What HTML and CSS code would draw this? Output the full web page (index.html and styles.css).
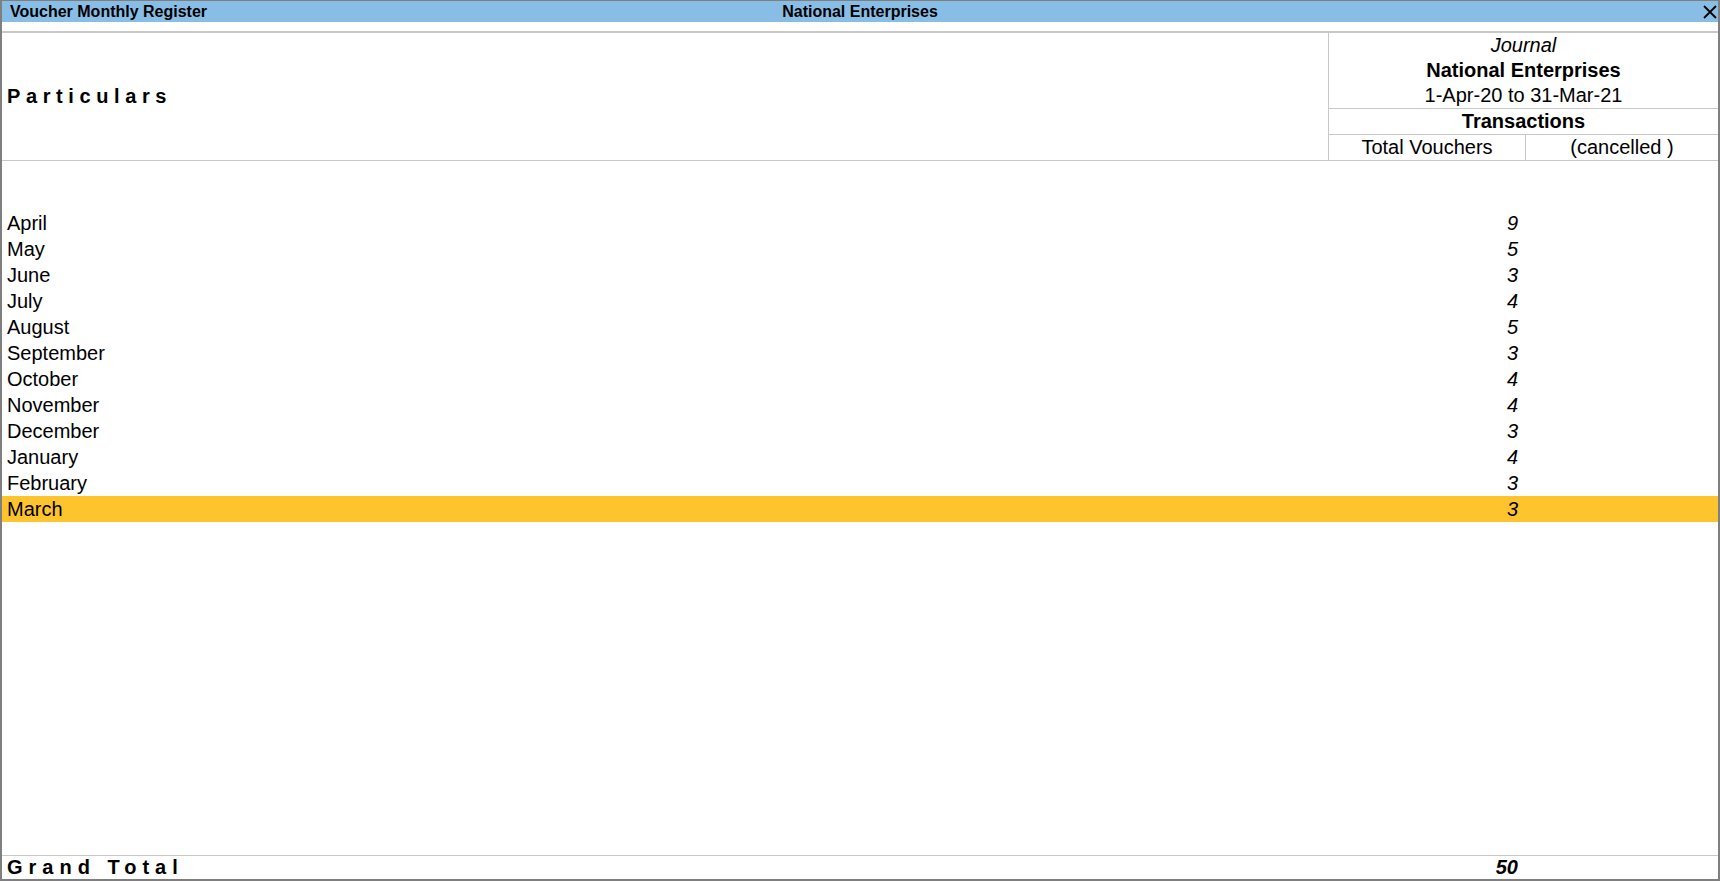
FILE: index.html
```html
<!DOCTYPE html>
<html>
<head>
    <meta charset="utf-8"/>
    <title>Voucher Monthly Register</title>
    <link rel="stylesheet" href="styles.css">
</head>
<body>

<div class="window">
    <div class="title-bar">
        <span class="title-left">Voucher Monthly Register</span>
        <span class="title-mid">National Enterprises</span>
        <span class="title-close">
            <svg width="14" height="14" viewBox="0 0 14 14"><path d="M1 1 L13 13 M13 1 L1 13" stroke="#000" stroke-width="1.8" fill="none"/></svg>
        </span>
    </div>
    <div class="title-gap"></div>

    <div class="report-head">
        <div class="head-particulars">Particulars</div>
        <div class="head-cols">
            <div class="head-info">
                <div class="i">Journal</div>
                <div class="b">National Enterprises</div>
                <div>1-Apr-20 to 31-Mar-21</div>
            </div>
            <div class="head-trans">Transactions</div>
            <div class="head-sub">
                <div>Total Vouchers</div>
                <div>(cancelled )</div>
            </div>
        </div>
    </div>

    <div class="report-body">
        <div class="row"><div class="name">April</div><div class="num">9</div><div></div></div>
        <div class="row"><div class="name">May</div><div class="num">5</div><div></div></div>
        <div class="row"><div class="name">June</div><div class="num">3</div><div></div></div>
        <div class="row"><div class="name">July</div><div class="num">4</div><div></div></div>
        <div class="row"><div class="name">August</div><div class="num">5</div><div></div></div>
        <div class="row"><div class="name">September</div><div class="num">3</div><div></div></div>
        <div class="row"><div class="name">October</div><div class="num">4</div><div></div></div>
        <div class="row"><div class="name">November</div><div class="num">4</div><div></div></div>
        <div class="row"><div class="name">December</div><div class="num">3</div><div></div></div>
        <div class="row"><div class="name">January</div><div class="num">4</div><div></div></div>
        <div class="row"><div class="name">February</div><div class="num">3</div><div></div></div>
        <div class="row selected"><div class="name">March</div><div class="num">3</div><div></div></div>
    </div>

    <div class="report-foot row">
        <div class="name spaced">Grand Total</div>
        <div class="num">50</div>
        <div></div>
    </div>
</div>

</body>
</html>
```

FILE: styles.css
```css
html, body {
    margin: 0;
    padding: 0;
}

body {
    font-family: "Liberation Sans", Arial, sans-serif;
    color: #000;
    background: #fff;
}

.window {
    height: 881px;
    box-sizing: border-box;
    border: 2px solid #7f7f7f;
    border-top-width: 1px;
    display: flex;
    flex-direction: column;
    overflow: hidden;
}

.title-bar {
    height: 21px;
    background: #88bde6;
    position: relative;
    display: flex;
    align-items: center;
    font-size: 16px;
    font-weight: bold;
}

.title-left {
    padding-left: 8px;
}

.title-mid {
    position: absolute;
    left: 0;
    right: 0;
    text-align: center;
    pointer-events: none;
}

.title-close {
    margin-left: auto;
    margin-right: 1px;
    display: flex;
}

.title-gap {
    height: 9px;
}

.report-head {
    display: grid;
    grid-template-columns: 1fr 390px;
    border-top: 2px solid #c8c8c8;
    border-bottom: 1px solid #c8c8c8;
    font-size: 20px;
}

.head-particulars {
    display: flex;
    align-items: center;
    padding-left: 5px;
    font-weight: bold;
    letter-spacing: 5.6px;
}

.head-cols {
    border-left: 1px solid #c8c8c8;
    text-align: center;
}

.head-info {
    line-height: 25px;
    border-bottom: 1px solid #c8c8c8;
}

.head-info .i {
    font-style: italic;
}

.head-info .b {
    font-weight: bold;
}

.head-trans {
    font-weight: bold;
    line-height: 25px;
    border-bottom: 1px solid #c8c8c8;
}

.head-sub {
    display: grid;
    grid-template-columns: 196px 1fr;
    line-height: 25px;
}

.head-sub div + div {
    border-left: 1px solid #c8c8c8;
}

.report-body {
    flex: 1;
    padding-top: 49px;
}

.row {
    display: grid;
    grid-template-columns: 1fr 196px 194px;
    height: 26px;
    line-height: 26px;
    font-size: 20px;
}

.row .name {
    padding-left: 5px;
}

.row .num {
    font-style: italic;
    text-align: right;
    padding-right: 6px;
}

.row.selected {
    background: #fdc42d;
}

.report-foot {
    border-top: 1px solid #c8c8c8;
    height: 23px;
    line-height: 23px;
    font-weight: bold;
}

.spaced {
    letter-spacing: 6px;
}
```
